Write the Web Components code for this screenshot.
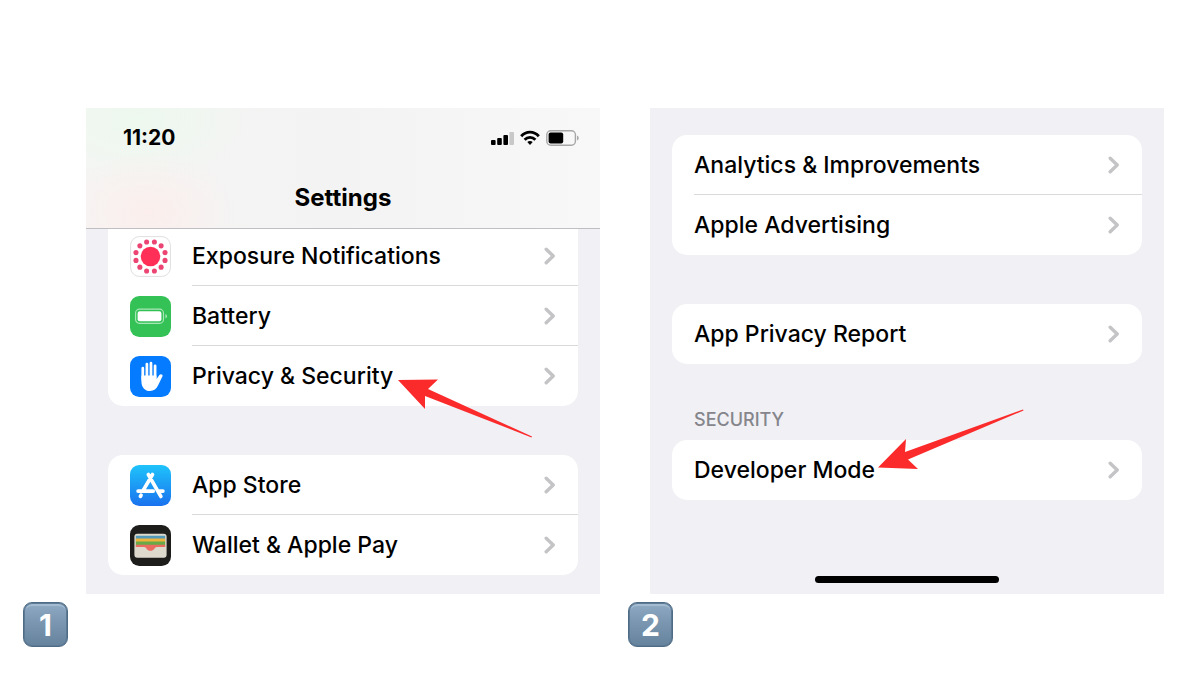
<!DOCTYPE html>
<html lang="en">
<head>
<meta charset="utf-8">
<meta name="viewport" content="width=device-width, initial-scale=1">
<title>Turn on Developer Mode</title>
<style>
body {
  margin: 0;
  background: #fff;
  color: #000;
  font-family: Inter, "Liberation Sans", sans-serif;
}
</style>
</head>
<body>

<step-guide>
  <guide-step number="1" class="first">
    <phone-screen>
      <status-header slot="header" time="11:20">Settings</status-header>
      <settings-group class="scrolled">
        <settings-row><app-icon slot="icon" name="exposure"></app-icon>Exposure Notifications</settings-row>
        <settings-row><app-icon slot="icon" name="battery"></app-icon>Battery</settings-row>
        <settings-row><app-icon slot="icon" name="privacy"></app-icon>Privacy &amp; Security<red-arrow slot="pointer" from="right-below"></red-arrow></settings-row>
      </settings-group>
      <settings-group>
        <settings-row><app-icon slot="icon" name="appstore"></app-icon>App Store</settings-row>
        <settings-row><app-icon slot="icon" name="wallet"></app-icon>Wallet &amp; Apple Pay</settings-row>
      </settings-group>
    </phone-screen>
  </guide-step>
  <guide-step number="2">
    <phone-screen home>
      <settings-group class="top">
        <settings-row>Analytics &amp; Improvements</settings-row>
        <settings-row>Apple Advertising</settings-row>
      </settings-group>
      <settings-group>
        <settings-row>App Privacy Report</settings-row>
      </settings-group>
      <settings-group heading="SECURITY">
        <settings-row>Developer Mode<red-arrow slot="pointer" from="right-above"></red-arrow></settings-row>
      </settings-group>
    </phone-screen>
  </guide-step>
</step-guide>

<script>
// every element gets its markup the same way
function attach(el, html) {
  const template = document.createElement('template');
  template.innerHTML = html;
  el.attachShadow({ mode: 'open' });
  el.shadowRoot.appendChild(template.content.cloneNode(true));
}

class StepGuide extends HTMLElement {
  constructor() {
    super();
    attach(this, `
<style>
:host {
  display: grid;
  grid-template-columns: 577fr 536fr;
  gap: 28px;
  padding: 108px 36px 28px 23px;
}
</style>
<slot></slot>`);
  }
}
customElements.define('step-guide', StepGuide);

class GuideStep extends HTMLElement {
  constructor() {
    super();
    attach(this, `
<style>
:host {
  --indent: 22px;
  display: flex;
  flex-direction: column;
  gap: 8px;
}
:host(.first) { --indent: 63px; }
.screen {
  display: flex;
  flex: 1;
  padding-left: var(--indent);
}
.badge {
  display: flex;
  align-items: center;
  justify-content: center;
  box-sizing: border-box;
  width: 45px;
  height: 45px;
  border: 1px solid #4f6c86;
  border-radius: 9px;
  background: linear-gradient(#8fabc4, #7c98b2 40%, #66839d);
  box-shadow: inset 0 0 0 1px #5d7a95, inset 0 3px 1px #a5bdd2;
  color: #fff;
  font-size: 30px;
  font-weight: 700;
  line-height: 40px;
}
</style>
<div class="screen"><slot></slot></div>
<div class="badge"></div>`);
  }
  connectedCallback() {
    this.shadowRoot.querySelector('.badge').textContent = this.getAttribute('number');
  }
}
customElements.define('guide-step', GuideStep);

class PhoneScreen extends HTMLElement {
  constructor() {
    super();
    attach(this, `
<style>
:host {
  display: flex;
  flex: 1;
  flex-direction: column;
  background: #f0f0f5;
}
.content {
  display: flex;
  flex: 1;
  flex-direction: column;
  padding: 0 22px 19px;
}
.home {
  display: none;
  width: 184px;
  height: 7px;
  margin: 0 auto 11px;
  border-radius: 4px;
  background: #000;
}
:host([home]) .home { display: block; }
</style>
<slot name="header"></slot>
<div class="content"><slot></slot></div>
<div class="home"></div>`);
  }
}
customElements.define('phone-screen', PhoneScreen);

class StatusHeader extends HTMLElement {
  constructor() {
    super();
    attach(this, `
<style>
:host {
  position: relative;
  z-index: 1;
  display: block;
  border-bottom: 1px solid #bfbfc3;
  background:
    radial-gradient(ellipse 90px 60px at 62px 104px, #fbeeec, transparent),
    radial-gradient(ellipse 120px 70px at 50px 10px, #edf8ee, transparent),
    linear-gradient(90deg, #f5f5f4, #f3f3f3 50%, #f8f8f8);
}
.status {
  display: flex;
  align-items: center;
  justify-content: space-between;
  height: 60px;
  padding: 0 21px 0 37px;
}
time { font-size: 21px; font-weight: 700; line-height: 24px; }
.signals { display: flex; gap: 6px; align-items: center; }
svg { display: block; }
h1 { margin: 0; font-size: 24px; font-weight: 700; line-height: 60px; text-align: center; }
</style>
<div class="status">
  <time></time>
  <div class="signals">
    <svg width="23" height="16" viewBox="0 0 23 16">
      <rect x="0" y="10" width="4.6" height="5" rx="1"/><rect x="6.2" y="8" width="4.6" height="7" rx="1"/>
      <rect x="12.4" y="5" width="4.6" height="10" rx="1"/><rect x="18.4" y="2" width="4.6" height="13" rx="1" fill="#c8c8c8"/>
    </svg>
    <svg width="20" height="16" viewBox="0 0 20 16" fill="none" stroke="#000" stroke-width="2.8">
      <path d="M1.2 6.2C6 .8 14 .8 18.8 6.2"/><path d="M4.6 9.8c3-3.2 7.8-3.2 10.8 0"/>
      <path d="M7.3 12.1c1.6-1.4 3.8-1.4 5.4 0L10 15z" fill="#000" stroke="none"/>
    </svg>
    <svg width="33" height="16" viewBox="0 0 33 16">
      <rect x=".8" y=".8" width="28.6" height="14.4" rx="4" fill="none" stroke="#a7a7a7" stroke-width="1.4"/>
      <rect x="2.6" y="2.6" width="14.6" height="10.8" rx="2"/>
      <path d="M31 5.5c2.3.8 2.3 4.2 0 5z" fill="#a7a7a7"/>
    </svg>
  </div>
</div>
<h1><slot></slot></h1>`);
  }
  connectedCallback() {
    this.shadowRoot.querySelector('time').textContent = this.getAttribute('time');
  }
}
customElements.define('status-header', StatusHeader);

class SettingsGroup extends HTMLElement {
  constructor() {
    super();
    attach(this, `
<style>
:host { display: block; margin-top: 49px; }
:host([heading]) { margin-top: 45px; }
:host(.top) { margin-top: 27px; }
/* the first group has scrolled a little under the header */
:host(.scrolled) { margin-top: -3px; }
:host(.scrolled) .card { border-radius: 0 0 15px 15px; }
h2 {
  margin: 0;
  padding: 0 22px 9px;
  color: #85858b;
  font-size: 18px;
  font-weight: 500;
  line-height: 22px;
}
.card { border-radius: 15px; background: #fff; }
</style>
<h2 hidden></h2>
<div class="card"><slot></slot></div>`);
  }
  connectedCallback() {
    const heading = this.shadowRoot.querySelector('h2');
    if (this.hasAttribute('heading')) {
      heading.textContent = this.getAttribute('heading');
      heading.hidden = false;
    }
  }
}
customElements.define('settings-group', SettingsGroup);

class SettingsRow extends HTMLElement {
  constructor() {
    super();
    attach(this, `
<style>
:host { position: relative; display: block; }
a {
  display: flex;
  align-items: center;
  gap: 21px;
  padding-left: 22px;
  color: inherit;
  text-decoration: none;
}
.line {
  display: flex;
  flex: 1;
  align-items: center;
  justify-content: space-between;
  box-sizing: border-box;
  height: 60px;
  padding-right: 22px;
  border-bottom: 1px solid #d9d9dc;
  font-size: 23px;
  font-weight: 540;
  line-height: 30px;
}
:host(:last-child) .line { border-bottom-color: transparent; }
svg { display: block; }
</style>
<a href="#">
  <slot name="icon"></slot>
  <span class="line">
    <span><slot></slot></span>
    <svg width="12" height="18" viewBox="0 0 12 18" fill="none" stroke="#c4c4c6" stroke-width="3.4" stroke-linecap="round" stroke-linejoin="round"><path d="M2.2 2.2 9.2 9l-7 6.8"/></svg>
  </span>
</a>
<slot name="pointer"></slot>`);
  }
}
customElements.define('settings-row', SettingsRow);

// the arrows lie over the rows and run out past the card
const arrows = {
  'right-below': '<svg width="136" height="60" viewBox="0 0 136 60"><path d="M0 1 40 .5 30 10l104 47.5-.5 1L27 17v13z"/></svg>',
  'right-above': '<svg width="146" height="62" viewBox="0 0 146 62"><path d="M0 58.5 28 30l-1 13L145 .5l.5 1L30 50.5 40 60z"/></svg>'
};

class RedArrow extends HTMLElement {
  constructor() {
    super();
    attach(this, `
<style>
:host {
  position: absolute;
  z-index: 2;
  left: 290px;
  top: 33px;
  pointer-events: none;
}
:host([from="right-above"]) { left: 206px; top: -31px; }
svg { display: block; fill: #fb2b2c; }
</style>`);
  }
  connectedCallback() {
    this.shadowRoot.innerHTML += arrows[this.getAttribute('from')];
  }
}
customElements.define('red-arrow', RedArrow);

function dots() {
  let out = '';
  for (let i = 0; i < 12; i++) {
    const a = (i * 30 + 15) * Math.PI / 180;
    out += `<circle cx="${21 + 15.4 * Math.cos(a)}" cy="${21 + 15.4 * Math.sin(a)}" r="2.6"/>`;
  }
  return out;
}

const icons = {
  exposure: `<rect x=".6" y=".6" width="40.8" height="40.8" rx="9" fill="#fff" stroke="#dedee0"/>
    <g fill="#ec4473">${dots()}</g><circle cx="21" cy="21" r="10" fill="#ff2f58"/>`,
  battery: `<rect width="42" height="42" rx="9.5" fill="#34c257"/>
    <rect x="5.7" y="13.5" width="28.6" height="14.5" rx="4" fill="none" stroke="#a9e6b7" stroke-width="1.2"/>
    <rect x="7.8" y="15.6" width="24.4" height="10.3" rx="2.2" fill="#fff"/>
    <path d="M36.3 18.5c2.2.8 2.2 3.8 0 4.6z" fill="#a9e6b7"/>`,
  privacy: `<rect width="42" height="42" rx="9.5" fill="#057bff"/>
    <g fill="none" stroke="#fff" stroke-width="2.8" stroke-linecap="round">
      <path d="M13.1 24V12.5M17.3 22V8.3M21.5 22V7.3M25.7 23V10"/></g>
    <path d="M11.7 20v6c0 6 3.5 9.8 8.8 9.8 4 0 6.5-2 8.3-5.8l4.5-9.3c.7-1.7-1.8-3-3.2-1.2l-3 4.2V20z" fill="#fff"/>`,
  appstore: `<defs><linearGradient id="g" x2="0" y2="1"><stop stop-color="#1fc3fb"/><stop offset="1" stop-color="#1a72ee"/></linearGradient></defs>
    <rect width="42" height="42" rx="9.5" fill="url(#g)"/>
    <g fill="none" stroke="#fff" stroke-width="3.8" stroke-linecap="round">
      <path d="M18.8 9.8l12.8 22.4M23 9.8 13.2 26.5M8.3 26.7h15.500M29.500 26.700h4.200M11.300 31l-.6 1.200"/></g>`,
  wallet: `<defs><clipPath id="c"><rect x="4.500" y="9" width="33" height="24.500" rx="3"/></clipPath></defs>
    <rect width="42" height="42" rx="9.5" fill="#1d1d1c"/>
    <g clip-path="url(#c)"><path fill="#ded9cd" d="M4 8h34v26H4z"/>
      <path fill="#5399ba" d="M6 11h30v5H6z"/><path fill="#efb23a" d="M6 13.8h30v5H6z"/>
      <path fill="#69aa48" d="M6 17h30v5H6z"/>
      <path fill="#ec6b60" d="M6 20.3h30v2.200h-8.500c-2.500 0-2.500 4-6.500 4s-4-4-6.500-4H6z"/></g>`
};

class AppIcon extends HTMLElement {
  constructor() {
    super();
    attach(this, `
<style>
:host { display: block; flex: none; width: 41px; height: 41px; }
svg { display: block; width: 100%; height: 100%; }
</style>`);
  }
  connectedCallback() {
    this.shadowRoot.innerHTML += `<svg viewBox="0 0 42 42">${icons[this.getAttribute('name')]}</svg>`;
  }
}
customElements.define('app-icon', AppIcon);
</script>
</body>
</html>
